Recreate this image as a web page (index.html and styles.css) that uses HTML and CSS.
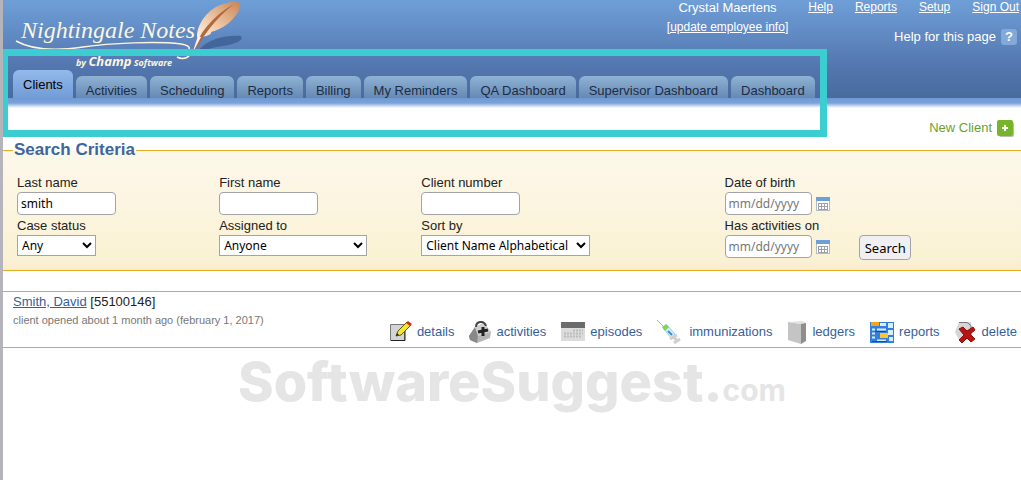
FILE: index.html
```html
<!DOCTYPE html>
<html lang="en">
<head>
    <meta charset="UTF-8">
    <meta name="viewport" content="width=device-width, initial-scale=1.0">
    <title>Nightingale Notes</title>
    <link rel="stylesheet" href="styles.css">
</head>
<body>

    <header class="header">
        <div class="top">
            <svg class="logo" viewBox="3 0 247 70" role="img" aria-label="Nightingale Notes by Champ Software">
                <defs>
                    <linearGradient id="feather" x1="0" y1="1" x2="1" y2="0">
                        <stop offset="0" stop-color="#fff1e2"/>
                        <stop offset=".4" stop-color="#eec9a8"/>
                        <stop offset="1" stop-color="#c98455"/>
                    </linearGradient>
                </defs>
                <path d="M199 50C208 39 226 35 241 36Q244 40 235 43C224 48 211 44 193 57Z" fill="#38598c" opacity=".7"/>
                <text x="21" y="38" class="logo-script">Nightingale Notes</text>
                <path d="M16 41C32 50 56 51 83 47S158 41 181 44C194 46 191 53 178 50" fill="none" stroke="#fdf6df" stroke-width="1.5"/>
                <path d="M177 57Q184 61 190 55" fill="none" stroke="#fdf6df" stroke-width="1.5"/>
                <path d="M197 37C197 25 206 11 220 5L234 1Q242 1 239 10C233 22 222 29 211 32Q213 35 198 38Z" fill="url(#feather)"/>
                <path d="M193 51C199 34 212 16 234 4C215 19 203 36 195 51Z" fill="#b5683c"/>
                <path d="M192 54L198 36L201 37Z" fill="#fff5e6"/>
                <text x="76" y="66" class="logo-by">by <tspan class="logo-champ">Champ</tspan> <tspan class="logo-soft">Software</tspan></text>
            </svg>

            <div class="user">
                <div>Crystal Maertens</div>
                <a href="#">[update employee info]</a>
            </div>

            <div class="help">
                <nav class="links">
                    <a href="#">Help</a>
                    <a href="#">Reports</a>
                    <a href="#">Setup</a>
                    <a href="#">Sign Out</a>
                </nav>
                <div class="page-help">
                    Help for this page
                    <button type="button" class="help-button">?</button>
                </div>
            </div>
        </div>

        <nav class="tabs">
            <a href="#" class="tab active">Clients</a>
            <a href="#" class="tab">Activities</a>
            <a href="#" class="tab">Scheduling</a>
            <a href="#" class="tab">Reports</a>
            <a href="#" class="tab">Billing</a>
            <a href="#" class="tab">My Reminders</a>
            <a href="#" class="tab">QA Dashboard</a>
            <a href="#" class="tab">Supervisor Dashboard</a>
            <a href="#" class="tab">Dashboard</a>
        </nav>
        <div class="highlight"></div>
    </header>

    <main>
        <div class="new-client">
            <a href="#">New Client
                <svg width="17" height="17" viewBox="0 0 17 17">
                    <rect x="2" y="2" width="15" height="15" rx="2" fill="#bbb"/>
                    <rect width="16" height="16" rx="2" fill="#76b52a"/>
                    <path d="M8 5v6M5 8h6" stroke="#fff" stroke-width="2"/>
                </svg>
            </a>
        </div>

        <form>
            <fieldset class="search">
                <legend>Search Criteria</legend>
                <div class="fields">
                    <div class="field">
                        <label for="last">Last name</label>
                        <input type="text" id="last" value="smith">
                    </div>
                    <div class="field">
                        <label for="first">First name</label>
                        <input type="text" id="first">
                    </div>
                    <div class="field">
                        <label for="number">Client number</label>
                        <input type="text" id="number">
                    </div>
                    <div class="field">
                        <label for="birth">Date of birth</label>
                        <div class="date">
                            <input type="text" id="birth" placeholder="mm/dd/yyyy">
                            <svg width="14" height="14" viewBox="0 0 14 14">
                                <rect x=".5" y=".5" width="13" height="13" fill="#fff" stroke="#b4bcc8"/>
                                <path d="M0 0h14v4H0z" fill="#6f9fd8"/>
                                <path d="M2 6.500h10M2 9.500h10M2 12.500h10M2.500 6v7M5.500 6v7M8.500 6v7M11.500 6v7" stroke="#9a9fa8"/>
                            </svg>
                        </div>
                    </div>
                    <div></div>
                    <div class="field">
                        <label for="status">Case status</label>
                        <select id="status" class="small"><option>Any</option></select>
                    </div>
                    <div class="field">
                        <label for="assigned">Assigned to</label>
                        <select id="assigned" class="medium"><option>Anyone</option></select>
                    </div>
                    <div class="field">
                        <label for="sort">Sort by</label>
                        <select id="sort" class="large"><option>Client Name Alphabetical</option></select>
                    </div>
                    <div class="field">
                        <label for="activity">Has activities on</label>
                        <div class="date">
                            <input type="text" id="activity" placeholder="mm/dd/yyyy">
                            <svg width="14" height="14" viewBox="0 0 14 14">
                                <rect x=".5" y=".5" width="13" height="13" fill="#fff" stroke="#b4bcc8"/>
                                <path d="M0 0h14v4H0z" fill="#6f9fd8"/>
                                <path d="M2 6.500h10M2 9.500h10M2 12.500h10M2.500 6v7M5.500 6v7M8.500 6v7M11.500 6v7" stroke="#9a9fa8"/>
                            </svg>
                        </div>
                    </div>
                    <button type="submit" class="search-button">Search</button>
                </div>
            </fieldset>
        </form>

        <section class="client">
            <div class="client-name"><a href="#">Smith, David</a> [55100146]</div>
            <div class="opened">client opened about 1 month ago (february 1, 2017)</div>
            <div class="actions">
                <a href="#">
                    <svg width="23" height="22" viewBox="0 0 23 22">
                        <path d="M1.500 3.500h14v16h-14z" fill="#d4d4d4" stroke="#777"/>
                        <path d="M2 19.500h14V9" fill="none" stroke="#222"/>
                        <path d="M7 15l2-5L18 1l4 3-10 10z" fill="#f5e829" stroke="#5c5a13"/>
                        <path d="M17 2l2-2 4 3-2 2z" fill="#d62c20"/>
                        <path d="M7 15l1-3 2 2z" fill="#222"/>
                    </svg>
                    details
                </a>
                <a href="#">
                    <svg width="22" height="22" viewBox="0 0 22 22">
                        <path d="M0 15L6 6l9-4 7 9-1 6-13 5-7-3z" fill="#b5b5b5"/>
                        <path d="M0 15L6 6l3 8-1 8-7-3z" fill="#888"/>
                        <path d="M6 6l9-4 7 9-13 4z" fill="#d0d0d0"/>
                        <path d="M7 6C7 0 15-1 17 5" fill="none" stroke="#444" stroke-width="2"/>
                        <path d="M14 6v9M9 11l10-2" stroke="#222" stroke-width="3"/>
                    </svg>
                    activities
                </a>
                <a href="#">
                    <svg width="24" height="20" viewBox="0 0 24 20">
                        <path d="M0 0h24v19H0z" fill="#dcdcdc"/>
                        <path d="M0 0h24v6H0z" fill="#6b6b6b"/>
                        <path d="M12 8.500h10M3 11.500h19M3 14.500h17" stroke="#bbb" stroke-width="2" stroke-dasharray="2 1"/>
                    </svg>
                    episodes
                </a>
                <a href="#" class="wide">
                    <svg width="24" height="26" viewBox="0 0 24 26">
                        <path d="M0 1l8 8" stroke="#aaa"/>
                        <path d="M6 9l4-3 8 9-4 4z" fill="#d5edf9" stroke="#a4cfe6"/>
                        <path d="M5 8l4-3 3 3-4 4z" fill="#80d35c"/>
                        <path d="M11 12l4 4" stroke="#3a8fc7" stroke-width="2"/>
                        <path d="M13 20l7-4M17 18l3 4M17 24l6-4" stroke="#d0d0d0" stroke-width="3"/>
                    </svg>
                    immunizations
                </a>
                <a href="#">
                    <svg width="20" height="23" viewBox="0 0 20 23">
                        <path d="M1 1L14 3v20L1 19z" fill="#c4c4c4"/>
                        <path d="M1 1L15 0l4 2-5 1z" fill="#e2e2e2"/>
                        <path d="M14 3l5-1v18l-5 3z" fill="#8e8e8e"/>
                    </svg>
                    ledgers
                </a>
                <a href="#">
                    <svg width="24" height="21" viewBox="0 0 24 21">
                        <path d="M0 0h24v21H0z" fill="#347fd8"/>
                        <path d="M1 0h8v4H1z" fill="#f4a51c"/>
                        <path d="M10 1h6v3h-6zM18 1h5v5h-5zM18 8h5v5h-5zM19 15h4v4h-4z" fill="#d8ecff"/>
                        <path d="M2 7.500h3M7 7.500h9M2 11.500h3M2 15.500h3M7 18.500h9" stroke="#d8ecff" stroke-width="2"/>
                        <path d="M10 11h8v5h-8z" fill="#ffc52f"/>
                        <path d="M5 9.500h11M2 19.500h15" stroke="#174b98"/>
                    </svg>
                    reports
                </a>
                <a href="#">
                    <svg width="22" height="22" viewBox="0 0 22 22">
                        <path d="M4 1h12v18H4l-4-8z" fill="#d6d6d6"/>
                        <path d="M4 1.500h8l4 3V17" fill="none" stroke="#777"/>
                        <path d="M4 8l4-2 4 4 6-4 2 3-5 4 5 5-4 3-4-4-5 5-3-3 5-5z" fill="#b81414" stroke="#8e0d0d"/>
                    </svg>
                    delete
                </a>
            </div>
        </section>

        <p class="watermark">SoftwareSuggest.<span>com</span></p>
    </main>

</body>
</html>
```
FILE: styles.css
```css
* {
    box-sizing: border-box;
}

html {
    background: #fff;
}

body {
    margin: 0;
    min-height: 100vh;
    border-left: 3px solid #b5b4bb;
    font-family: "Liberation Sans", Arial, sans-serif;
    font-size: 13px;
    line-height: 16px;
    color: #222;
}

a {
    color: #36609c;
}

.header {
    position: relative;
    background: linear-gradient(#6f9fd8, #5477b0 60%, #446799);
}

.header::after {
    content: "";
    display: block;
    height: 10px;
    background: linear-gradient(#6f99d3, #7ba2da 50%, #fff);
}

.top {
    display: flex;
    height: 70px;
    color: #fff;
}

.top a {
    color: #fff;
    font-size: 12px;
}

.logo {
    width: 247px;
    height: 70px;
}

.logo text {
    fill: #fdf6df;
}

.logo .logo-script {
    font: italic 24px "Liberation Serif", "Times New Roman", serif;
}

.logo .logo-by {
    font: italic bold 9px "Open Sans", sans-serif;
}

.logo-champ {
    font-size: 13px;
}

.user {
    margin-left: auto;
    text-align: center;
}

.user a {
    line-height: 22px;
}

.help {
    margin-left: 20px;
}

.links {
    display: flex;
    justify-content: flex-end;
    gap: 22px;
    padding-right: 2px;
    line-height: 14px;
}

.page-help {
    display: flex;
    justify-content: flex-end;
    align-items: center;
    gap: 5px;
    padding: 15px 4px 0 0;
}

.help-button {
    width: 16px;
    height: 16px;
    padding: 0;
    border: 0;
    border-radius: 3px;
    background: #82a9d8;
    color: #fff;
    font: bold 13px/16px "Liberation Sans", Arial, sans-serif;
}

.tabs {
    display: flex;
    align-items: flex-end;
    gap: 3px;
    height: 28px;
    padding-left: 10px;
}

.tab {
    height: 22px;
    padding: 7px 10px 0;
    border-radius: 6px 6px 0 0;
    background: linear-gradient(#8fb2d5, #6689b4);
    color: #1b2c44;
    line-height: 15px;
    text-decoration: none;
    white-space: nowrap;
}

.tab.active {
    height: 28px;
    background: linear-gradient(#93baeb, #719cd6);
    color: #000;
}

/* frame around the tab bar */
.highlight {
    position: absolute;
    top: 49px;
    left: -3px;
    width: 827px;
    height: 88px;
    border: 7px solid #3bcdd0;
    border-left-width: 8px;
    pointer-events: none;
}

.new-client {
    display: flex;
    justify-content: flex-end;
    padding: 12px 7px 0 0;
}

.new-client a {
    display: flex;
    gap: 5px;
    color: #6c9f2c;
    text-decoration: none;
}

.search {
    margin: 3px 0 0;
    padding: 14px 0 10px 10px;
    border: solid #e6ad22;
    border-width: 1px 0;
    background: linear-gradient(#fbf8ea, #fdf6e6 20%, #faf2d4 90%, #faebd0);
}

.search legend {
    padding: 0 1px;
    color: #3f659b;
    font-size: 17px;
    font-weight: bold;
    line-height: 20px;
}

.fields {
    display: grid;
    grid-template-columns: 30fr 30fr 45fr 20fr 24fr;
    padding-left: 4px;
}

.field {
    height: 43px;
}

.field label {
    display: block;
    height: 18px;
    line-height: 17px;
}

input, select, .search-button {
    border: 1px solid #a3a3a8;
    border-radius: 4px;
    background: #fff;
    color: #000;
    font: 12px "Noto Sans", sans-serif;
}

input {
    display: block;
    width: 99px;
    height: 23px;
    padding: 0 3px;
}

input::placeholder {
    color: #777;
}

.date {
    display: flex;
    align-items: center;
    gap: 4px;
}

.date input {
    width: 87px;
}

select {
    display: block;
    height: 21px;
    padding: 0;
    border-radius: 0;
}

.small {
    width: 79px;
}

.medium {
    width: 148px;
}

.large {
    width: 169px;
}

.search-button {
    justify-self: start;
    width: 52px;
    height: 25px;
    margin-top: 18px;
    padding: 0;
    background: #f0f0f2;
    font-size: 13px;
}

.client {
    margin-top: 20px;
    padding: 2px 4px 2px 10px;
    border: solid #f0a02e;
    border-width: 1px 0;
}

.opened {
    padding-top: 2px;
    color: #777;
    font-size: 11px;
}

.actions {
    display: flex;
    justify-content: flex-end;
    align-items: center;
    gap: 15px;
    height: 26px;
    margin-top: -9px;
}

.actions a {
    display: flex;
    align-items: center;
    gap: 5px;
    text-decoration: none;
}

.actions .wide {
    gap: 8px;
}

.watermark {
    margin: 6px 0 0;
    color: #e5e5e5;
    font: 800 54px/56px Inter, "Open Sans", sans-serif;
    text-align: center;
}

.watermark span {
    font-size: 30px;
    font-weight: 700;
}
```
